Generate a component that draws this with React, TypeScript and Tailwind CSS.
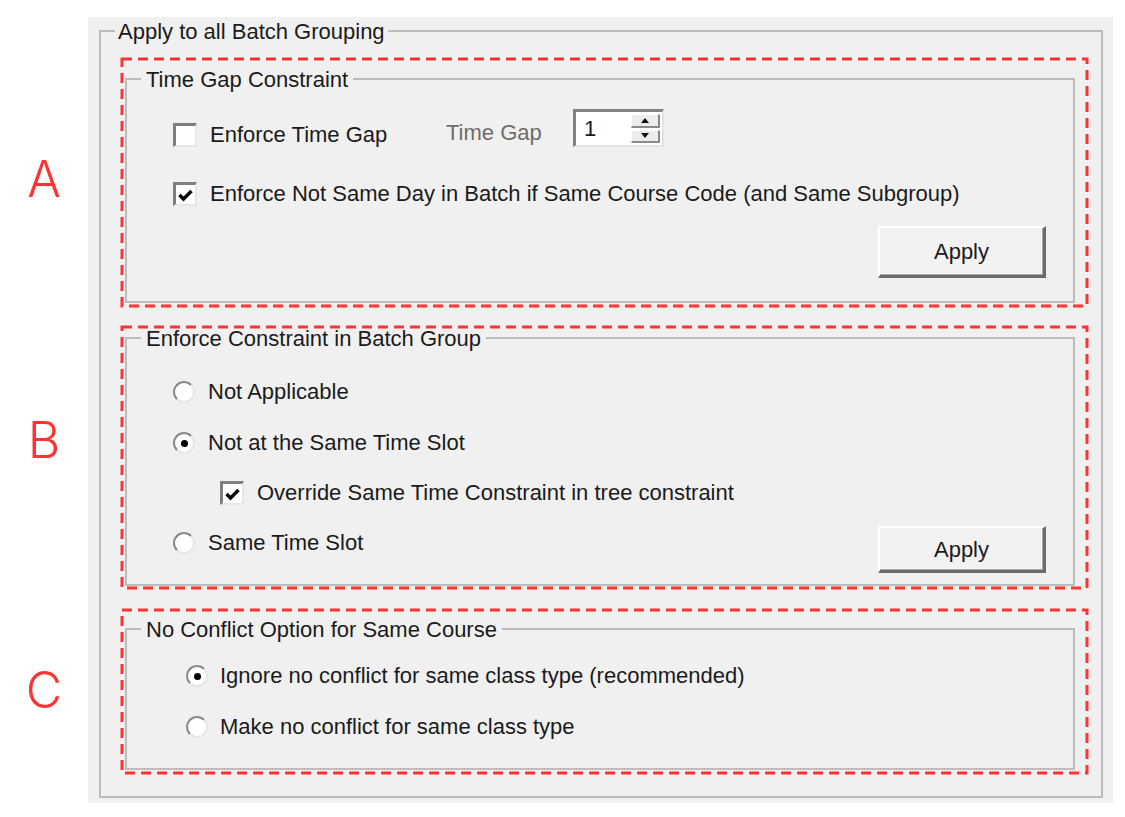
import React from "react";

function Check({ checked }: { checked?: boolean }) {
  return (
    <div className="w-[24px] h-[24px] shrink-0 bg-white border-t-[3px] border-l-[3px] border-r-2 border-b-2 border-t-[#7f7f7f] border-l-[#7f7f7f] border-r-[#e6e6e6] border-b-[#e6e6e6] flex items-center justify-center">
      {checked && (
        <svg width="15" height="13" viewBox="0 0 15 13" className="mt-[1px]">
          <path d="M1.5 6 L5.5 10 L13.5 2" fill="none" stroke="#000" strokeWidth="3.4" />
        </svg>
      )}
    </div>
  );
}

function Radio({ checked }: { checked?: boolean }) {
  return (
    <div className="w-[22px] h-[22px] shrink-0 rounded-full bg-white border-2 border-t-[#8a8a8a] border-l-[#8a8a8a] border-r-[#e6e6e6] border-b-[#e6e6e6] flex items-center justify-center">
      {checked && <div className="w-[7px] h-[7px] rounded-full bg-black" />}
    </div>
  );
}

function Dashed({ className, children }: { className: string; children: React.ReactNode }) {
  return (
    <div className={"relative flex flex-col p-[3px] " + className}>
      {children}
      <svg className="absolute left-[1.5px] top-[1.5px] w-[calc(100%-3px)] h-[calc(100%-3px)] overflow-visible pointer-events-none">
        <rect x="0" y="0" width="100%" height="100%" fill="none" stroke="#ff3333" strokeWidth="3" strokeDasharray="10 6" />
      </svg>
    </div>
  );
}

function ApplyButton({ className }: { className: string }) {
  return (
    <div
      className={
        "w-[168px] shrink-0 bg-[#f2f2f2] border-t-2 border-l-2 border-r-[3px] border-b-[3px] border-t-white border-l-white border-r-[#6b6b6b] border-b-[#6b6b6b] shadow-[inset_-1px_-1px_0_#a8a8a8] flex items-center justify-center ml-auto mr-[27px] " +
        className
      }
    >
      Apply
    </div>
  );
}

function SpinBox() {
  return (
    <div className="w-[91px] h-[38px] shrink-0 bg-white border-t-[3px] border-l-[3px] border-r-2 border-b-2 border-t-[#828282] border-l-[#828282] border-r-[#e3e3e3] border-b-[#e3e3e3] flex">
      <div className="flex-1 flex items-center pl-[8px] leading-none">1</div>
      <div className="w-[31px] flex flex-col py-[2px] pr-[2px] gap-[2px]">
        <div className="flex-1 bg-[#ececec] border-t border-l border-r-2 border-b-2 border-t-white border-l-white border-r-[#8a8a8a] border-b-[#8a8a8a] flex items-center justify-center">
          <svg width="8" height="5" viewBox="0 0 8 5">
            <path d="M0 5 L4 0 L8 5 Z" fill="#111" />
          </svg>
        </div>
        <div className="flex-1 bg-[#ececec] border-t border-l border-r-2 border-b-2 border-t-white border-l-white border-r-[#8a8a8a] border-b-[#8a8a8a] flex items-center justify-center">
          <svg width="8" height="5" viewBox="0 0 8 5">
            <path d="M0 0 L8 0 L4 5 Z" fill="#111" />
          </svg>
        </div>
      </div>
    </div>
  );
}

export default function App() {
  return (
    <div className="w-[1125px] h-[817px] bg-white flex font-['Liberation_Sans',Arial,sans-serif] text-[22px] text-[#1b1b1b]">
      {/* annotation letters */}
      <div className="w-[88px] shrink-0 flex flex-col items-center pt-[154px] font-['Inter',sans-serif] font-light text-[50px] leading-none text-[#ff3333]">
        <div className="h-[50px] flex items-center">A</div>
        <div className="h-[50px] mt-[211px] flex items-center">B</div>
        <div className="h-[50px] mt-[200px] flex items-center">C</div>
      </div>

      {/* dialog panel */}
      <div className="mt-[17px] w-[1025px] h-[786px] bg-[#f0f0f0] pl-[11px] pr-[10px] pb-[5px] flex flex-col">
        <fieldset className="m-0 p-0 min-w-0 border-2 border-[#bcbcbc] flex-1 flex flex-col">
          <legend className="ml-[14px] px-[3px] pt-[2px] leading-[26px] bg-[#f0f0f0]">Apply to all Batch Grouping</legend>
          <div className="pl-[19px] pr-[13px] pt-[12px] flex flex-col">
            {/* A */}
            <Dashed className="h-[250px]">
              <fieldset className="m-0 p-0 min-w-0 border-2 border-[#bcbcbc] flex-1 ml-[2px] mr-[10px] mt-[6px] mb-[1px]">
                <legend className="ml-[14px] px-[5px] pt-[2px] leading-[24px] bg-[#f0f0f0]">Time Gap Constraint</legend>
                <div className="pl-[46px] pt-[17px] flex flex-col">
                  <div className="flex items-start h-[38px]">
                    <div className="w-[273px] flex items-center mt-[14px]">
                      <Check />
                      <span className="ml-[13px] leading-[24px]">Enforce Time Gap</span>
                    </div>
                    <span className="w-[127px] mt-[12px] leading-[24px] text-[#6d6d6d]">Time Gap</span>
                    <SpinBox />
                  </div>
                  <div className="flex items-center mt-[35px]">
                    <Check checked />
                    <span className="ml-[13px] leading-[24px]">
                      Enforce Not Same Day in Batch if Same Course Code (and Same Subgroup)
                    </span>
                  </div>
                  <div className="flex mt-[20px]">
                    <ApplyButton className="h-[52px]" />
                  </div>
                </div>
              </fieldset>
            </Dashed>

            {/* B */}
            <Dashed className="h-[264px] mt-[18px]">
              <fieldset className="m-0 p-0 min-w-0 border-2 border-[#bcbcbc] flex-1 ml-[2px] mr-[10px] mt-[-3px] mb-0">
                <legend className="ml-[14px] px-[5px] pt-[2px] leading-[24px] bg-[#f0f0f0]">Enforce Constraint in Batch Group</legend>
                <div className="pl-[46px] pt-[29px] flex flex-col">
                  <div className="flex items-center h-[24px]">
                    <Radio />
                    <span className="ml-[13px] leading-[24px]">Not Applicable</span>
                  </div>
                  <div className="flex items-center h-[24px] mt-[27px]">
                    <Radio checked />
                    <span className="ml-[13px] leading-[24px]">Not at the Same Time Slot</span>
                  </div>
                  <div className="flex items-center h-[24px] mt-[26px] ml-[47px]">
                    <Check checked />
                    <span className="ml-[13px] leading-[24px]">Override Same Time Constraint in tree constraint</span>
                  </div>
                  <div className="flex items-start mt-[21px]">
                    <div className="flex items-center h-[24px] mt-[5px]">
                      <Radio />
                      <span className="ml-[13px] leading-[24px]">Same Time Slot</span>
                    </div>
                    <ApplyButton className="h-[47px]" />
                  </div>
                </div>
              </fieldset>
            </Dashed>

            {/* C */}
            <Dashed className="h-[166px] mt-[19px]">
              <fieldset className="m-0 p-0 min-w-0 border-2 border-[#bcbcbc] flex-1 ml-[2px] mr-[10px] mt-[5px] mb-[1px]">
                <legend className="ml-[14px] px-[5px] pt-[2px] leading-[24px] bg-[#f0f0f0]">No Conflict Option for Same Course</legend>
                <div className="pl-[59px] pt-[22px] flex flex-col">
                  <div className="flex items-center h-[24px]">
                    <Radio checked />
                    <span className="ml-[12px] leading-[24px]">Ignore no conflict for same class type (recommended)</span>
                  </div>
                  <div className="flex items-center h-[24px] mt-[27px]">
                    <Radio />
                    <span className="ml-[12px] leading-[24px]">Make no conflict for same class type</span>
                  </div>
                </div>
              </fieldset>
            </Dashed>
          </div>
        </fieldset>
      </div>
    </div>
  );
}
